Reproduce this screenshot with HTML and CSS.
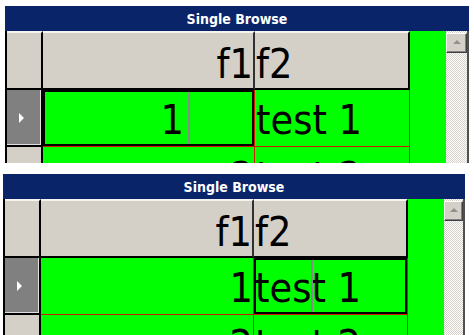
FILE: index.html
```html
<!DOCTYPE html>
<html lang="en">
<head>
    <meta charset="UTF-8">
    <title>Single Browse</title>
    <link rel="stylesheet" href="styles.css">
</head>
<body>
  <div class="browse p1">
    <div class="title">Single Browse</div>
    <div class="pane">
      <div class="grid">
        <div class="row hdr">
          <div class="sel"></div>
          <div class="cell c1">f1</div>
          <div class="cell c2">f2</div>
        </div>
        <div class="row">
          <div class="sel cur"><span class="arrow"></span></div>
          <div class="cell c1 focus edit1">1<span class="caret"></span></div>
          <div class="cell c2">test 1</div>
        </div>
        <div class="row">
          <div class="sel"></div>
          <div class="cell c1">2</div>
          <div class="cell c2">test 2</div>
        </div>
      </div>
      <div class="fill"></div>
      <div class="vscroll"><div class="up"><span></span></div></div>
    </div>
  </div>

  <div class="browse p2">
    <div class="title">Single Browse</div>
    <div class="pane">
      <div class="grid">
        <div class="row hdr">
          <div class="sel"></div>
          <div class="cell c1">f1</div>
          <div class="cell c2">f2</div>
        </div>
        <div class="row">
          <div class="sel cur"><span class="arrow"></span></div>
          <div class="cell c1">1</div>
          <div class="cell c2 focus edit2">test 1<span class="caret"></span></div>
        </div>
        <div class="row">
          <div class="sel"></div>
          <div class="cell c1">2</div>
          <div class="cell c2">test 2</div>
        </div>
      </div>
      <div class="fill"></div>
      <div class="vscroll"><div class="up"><span></span></div></div>
    </div>
  </div>
</body>
</html>
```

FILE: styles.css
```css
body{
  margin: 0;
  background-color: #fff;
  font-family: "DejaVu Sans Condensed", "DejaVu Sans", sans-serif;
}

.browse{
  display: flex;
  flex-direction: column;
  overflow: hidden;
  background-color: #00ff00;
}

.p1{
  margin: 6px 0 0 5px;
  width: 464px;
  height: 157px;
}

.p2{
  margin: 11px 0 0 3px;
  width: 462px;
  height: 161px;
}

.title{
  flex: none;
  height: 25px;
  line-height: 26px;
  background-color: #0a246a;
  color: #fff;
  font-size: 14px;
  font-weight: bold;
  text-align: center;
}

.pane{
  flex: 1;
  display: flex;
  min-height: 0;
}

.grid{
  flex: none;
  border-left: 2px solid #000;
}

.row{
  display: flex;
  height: 57px;
}

.hdr{
  height: 59px;
}

.sel{
  flex: none;
  width: 34px;
  height: 55px;
  background-color: #d4d0c8;
  border-right: 2px solid #000;
  border-bottom: 2px solid #000;
  display: flex;
  align-items: center;
  justify-content: center;
}

.hdr .sel{
  border-top: 2px solid #f4f3f0;
}

.sel.cur{
  background-color: #808080;
  box-shadow: inset -1px -1px 0 #e0e0e0;
}

.arrow{
  width: 0;
  height: 0;
  margin-right: 6px;
  border-left: 5px solid #fff;
  border-top: 5px solid transparent;
  border-bottom: 5px solid transparent;
}

.cell{
  position: relative;
  box-sizing: border-box;
  height: 57px;
  font-size: 41px;
  line-height: 46px;
  padding-top: 7px;
  white-space: nowrap;
  overflow: hidden;
  border-right: 1px solid #cc1a00;
  border-bottom: 1px solid #cc1a00;
}

.hdr .cell{
  height: 59px;
  padding-top: 8px;
  background-color: #d4d0c8;
  border-top: 2px solid #f4f3f0;
  border-bottom: 2px solid #000;
}

.hdr .c1{
  border-right: 2px solid #303030;
}

.hdr .c2{
  border-right: 2px solid #000;
}

.c1{
  text-align: right;
}

.c2{
  padding-left: 1px;
}

.p1 .c1{ width: 212px; }
.p1 .c2{ width: 155px; }
.p2 .c1{ width: 213px; }
.p2 .c2{ width: 154px; }

.focus{
  box-shadow: inset 0 0 0 2px #000;
}

.edit1{
  padding-right: 70px;
}

.caret{
  position: absolute;
  top: 2px;
  bottom: 2px;
  width: 2px;
  background-color: #8a8a8a;
}

.edit1 .caret{ left: 145px; }
.edit2 .caret{ left: 57px; }

.fill{
  flex: 1;
}

.vscroll{
  flex: none;
  width: 19px;
  border-right: 2px solid #505050;
  background: #fff repeating-conic-gradient(#d4d0c8 0 25%, #fff 0 50%) 0 0 / 2px 2px;
}

.p1 .vscroll{ width: 21px; }

.up{
  box-sizing: border-box;
  height: 20px;
  margin-top: 2px;
  background-color: #d4d0c8;
  border-top: 1px solid #fff;
  border-left: 1px solid #fff;
  border-right: 1px solid #404040;
  border-bottom: 1px solid #404040;
  box-shadow: inset -1px -1px 0 #808080;
  display: flex;
  align-items: center;
  justify-content: center;
}

.up span{
  width: 0;
  height: 0;
  margin-bottom: 2px;
  border-bottom: 4px solid #909090;
  border-left: 4px solid transparent;
  border-right: 4px solid transparent;
}
```
